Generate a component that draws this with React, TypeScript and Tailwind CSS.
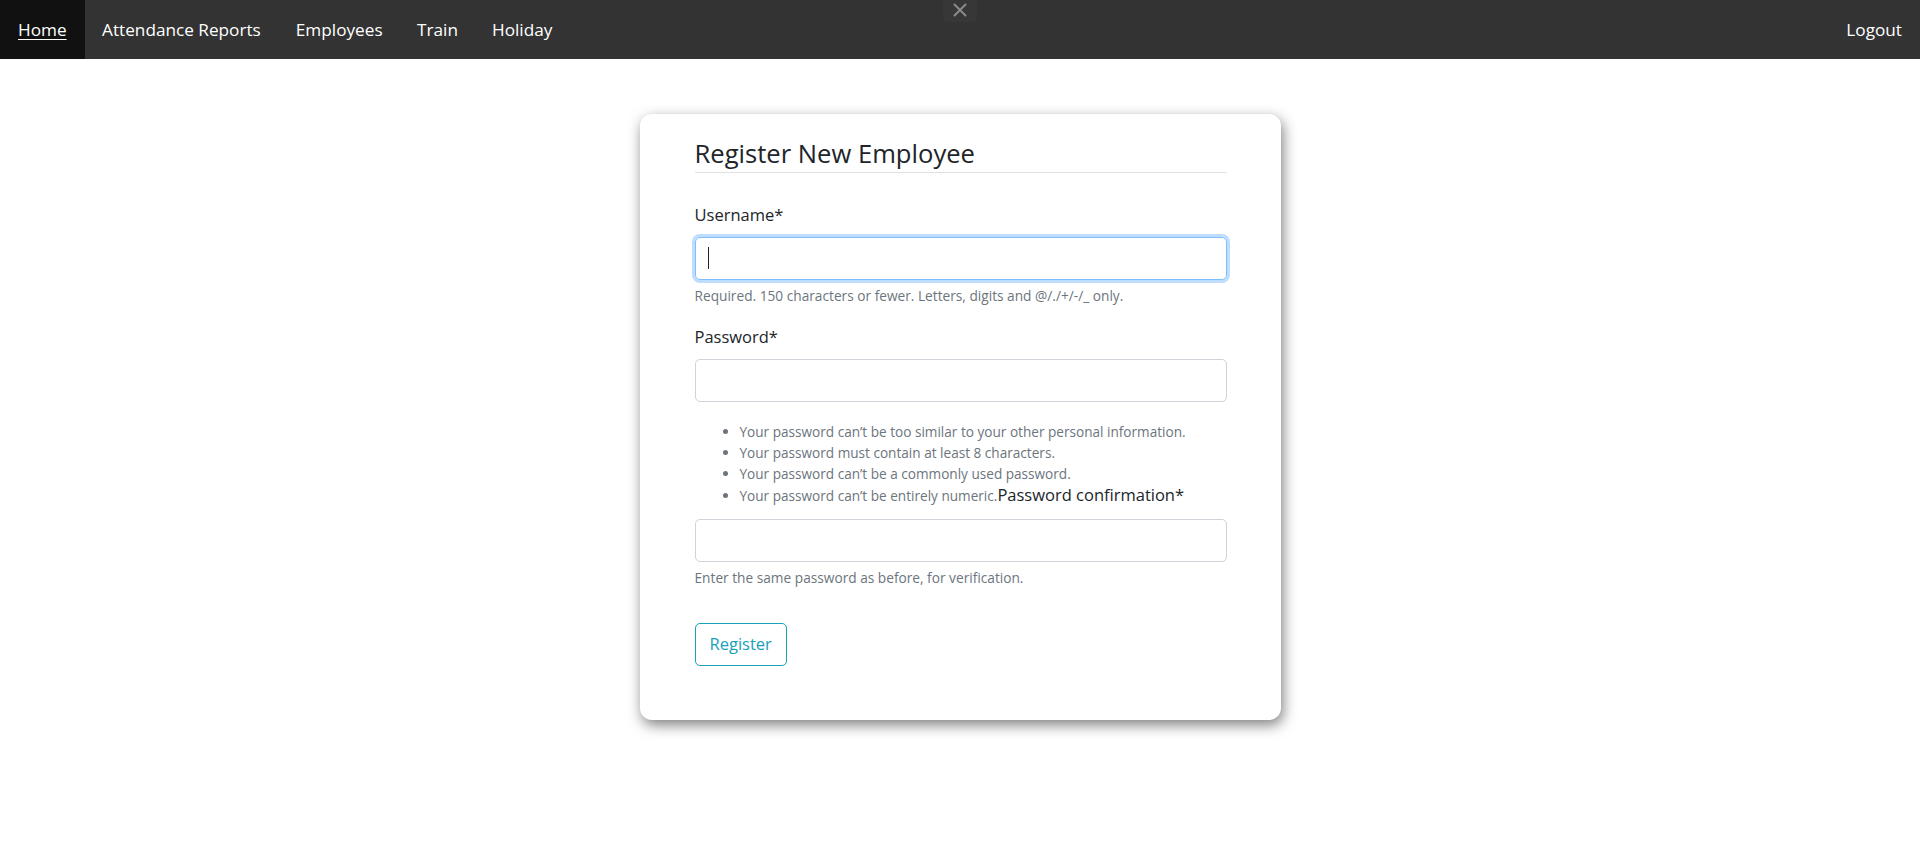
import React from "react";

const font = { fontFamily: '"Open Sans", "Noto Sans", Arial, sans-serif' };

export default function App() {
  return (
    <div className="min-h-[843px] bg-white text-[#212529]" style={font}>
      <nav className="relative flex h-[59px] items-stretch bg-[#333333] text-[17.2px] text-white">
        <a className="flex items-center bg-[#111111] px-[18px] underline underline-offset-[3px]">Home</a>
        <a className="flex items-center px-[17.5px]">Attendance Reports</a>
        <a className="flex items-center px-[17.5px]">Employees</a>
        <a className="flex items-center px-[17px]">Train</a>
        <a className="flex items-center px-[17px]">Holiday</a>
        <a className="ml-auto flex items-center px-[18px]">Logout</a>
        <div className="absolute left-[943px] top-[-8px] flex h-[30px] w-[34px] items-end justify-center rounded-b-md bg-[#373737] pb-[5px]">
          <svg width="14" height="14" viewBox="0 0 14 14">
            <path d="M1.5 1.5 L12.5 12.5 M12.5 1.5 L1.5 12.5" stroke="#8a8a8a" strokeWidth="2" strokeLinecap="round" />
          </svg>
        </div>
      </nav>

      <div className="flex justify-center pt-[55px]">
        <div className="w-[641px] rounded-[12px] bg-white pl-[55px] pr-[54px] pt-[24px] pb-[54px] shadow-[2px_5px_14px_rgba(0,0,0,0.5)]">
          <div className="border-b border-[#dee2e6] pb-[2px] text-[25.6px] leading-[32px]">Register New Employee</div>

          <div className="mt-[28.5px]">
            <label className="block text-[16.5px] leading-[26px]">Username*</label>
            <div className="mt-[9px] flex h-[43px] items-center rounded-[5px] border border-[#80bdff] px-[12px] shadow-[0_0_0_3px_rgba(0,123,255,0.25)]">
              <div className="h-[22px] w-px bg-[#212529]" />
            </div>
            <div className="mt-[5px] text-[13.7px] leading-[21px] text-[#6c757d]">
              Required. 150 characters or fewer. Letters, digits and @/./+/-/_ only.
            </div>
          </div>

          <div className="mt-[18px]">
            <label className="block text-[16.5px] leading-[26px]">Password*</label>
            <div className="mt-[9px] h-[43px] rounded-[5px] border border-[#ced4da]" />
            <ul className="mt-[19.5px] list-disc pl-[45px] text-[13.6px] leading-[21px] text-[#6c757d] marker:text-[#6c757d]">
              <li>Your password can’t be too similar to your other personal information.</li>
              <li>Your password must contain at least 8 characters.</li>
              <li>Your password can’t be a commonly used password.</li>
              <li>
                Your password can’t be entirely numeric.
                <span className="text-[16.5px] text-[#212529]">Password confirmation*</span>
              </li>
            </ul>
            <div className="mt-[13px] h-[43px] rounded-[5px] border border-[#ced4da]" />
            <div className="mt-[5px] text-[13.7px] leading-[21px] text-[#6c757d]">
              Enter the same password as before, for verification.
            </div>
          </div>

          <button className="mt-[35px] h-[43px] rounded-[5px] border border-[#17a2b8] px-[14px] text-[16.5px] text-[#17a2b8]">
            Register
          </button>
        </div>
      </div>
    </div>
  );
}
